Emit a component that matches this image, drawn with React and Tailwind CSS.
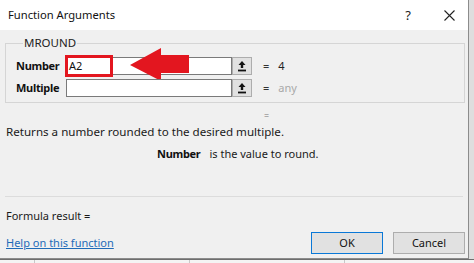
import React from "react";

function RefButton() {
  return (
    <div className="w-[20px] h-full bg-[#e1e1e1] border border-[#adadad] flex items-center justify-center">
      <svg width="10" height="12" viewBox="0 0 10 12">
        <path d="M5 1 L1.5 5 H3.8 V8 H6.2 V5 H8.5 Z" fill="#111" />
        <rect x="1" y="9.6" width="8" height="1.8" fill="#111" />
      </svg>
    </div>
  );
}

function ArgRow({ label, value, muted, children }) {
  return (
    <div className="flex items-center h-[18px]">
      <div className="w-[50px] font-bold text-[11px] tracking-[-0.3px] text-[#111]">{label}</div>
      <div className="relative flex-1 h-full flex">
        <div className="flex-1 bg-white border border-[#7a7a7a] flex items-center px-[2px]">
          {children}
        </div>
        <RefButton />
      </div>
      <div className="w-[204px] flex items-center pl-[11px]">
        <span className="text-[#333]">=</span>
        <span className={"ml-[9px] " + (muted ? "text-[#a8a8a8]" : "text-[#222]")}>{value}</span>
      </div>
    </div>
  );
}

export default function App() {
  return (
    <div
      className="w-[474px] h-[263px] bg-[#e9e9e9] flex flex-col overflow-hidden text-[11px] leading-[16px] text-[#1a1a1a]"
      style={{ fontFamily: '"Noto Sans", "Open Sans", sans-serif' }}
    >
      <div className="flex">
        {/* DIALOG */}
        <div className="w-[469px] h-[259px] bg-[#f0f0f0] border-r border-b border-[#8c8c8c] flex flex-col">
          {/* TITLE BAR */}
          <div className="h-[30px] bg-white flex items-center pl-[8px] shrink-0">
            <span className="text-[11.2px] text-[#111]">Function Arguments</span>
            <span className="ml-auto text-[13px] text-[#222]">?</span>
            <svg className="ml-[33px] mr-[13px]" width="11" height="11" viewBox="0 0 11 11">
              <path d="M0.5 0.5 L10.5 10.5 M10.5 0.5 L0.5 10.5" stroke="#222" strokeWidth="1.1" />
            </svg>
          </div>

          {/* BODY */}
          <div className="flex-1 flex flex-col pl-[5px] pr-[3px]">
            <fieldset className="mt-[5px] border border-[#d5d5d5] pl-[10px] pr-[8px] pt-[6px] pb-[5px] w-[460px]">
              <legend className="ml-[7px] px-[1px] text-[11.5px] text-[#222]">MROUND</legend>
              <div className="flex flex-col gap-[4px]">
                <div className="relative">
                  <ArgRow label="Number" value="4">
                    <span className="text-[#111]">A2</span>
                  </ArgRow>
                  {/* highlight box */}
                  <div className="absolute left-[49px] top-[-2px] w-[48px] h-[22px] border-[3px] border-[#e3161f]" />
                  {/* red arrow */}
                  <svg className="absolute left-[113px] top-[-10px]" width="62" height="36" viewBox="0 0 62 36">
                    <path d="M1 18 L32 1 V8 H60 V26 H32 V34 Z" fill="#e3161f" />
                  </svg>
                </div>
                <ArgRow label="Multiple" value="any" muted />
              </div>
            </fieldset>

            <div className="mt-[5px] pl-[259px] text-[#777] text-[9px] h-[16px] leading-[16px]">=</div>
            <div className="pl-[1px] text-[11.6px] text-[#1a1a1a]">Returns a number rounded to the desired multiple.</div>
            <div className="mt-[6px] pl-[152px] flex">
              <span className="font-bold tracking-[-0.3px] text-[#111]">Number</span>
              <span className="ml-[9px]">is the value to round.</span>
            </div>

            <div className="mt-[34px] mr-[2px] h-px bg-[#dcdcdc]" />

            <div className="mt-[11px] pl-[1px]">Formula result =</div>

            <div className="mt-[8px] flex items-center h-[22px]">
              <a className="pl-[1px] text-[#1f6bb8] underline">Help on this function</a>
              <button className="ml-auto w-[72px] h-[22px] bg-[#e1e1e1] border border-[#0a78d7] text-[#111]">OK</button>
              <button className="ml-[10px] w-[72px] h-[22px] bg-[#e1e1e1] border border-[#adadad] text-[#111]">Cancel</button>
            </div>
          </div>
        </div>
        <div className="flex-1 bg-[#dedede]" />
      </div>

      {/* sheet peeking below */}
      <div className="flex-1 flex bg-[#f4f4f4] border-t border-[#6e6e6e]">
        <div className="w-[35px] border-r border-[#c8c8c8]" />
        <div className="w-[155px] border-r border-[#c8c8c8]" />
        <div className="w-[155px] border-r border-[#c8c8c8]" />
        <div className="flex-1" />
      </div>
    </div>
  );
}
